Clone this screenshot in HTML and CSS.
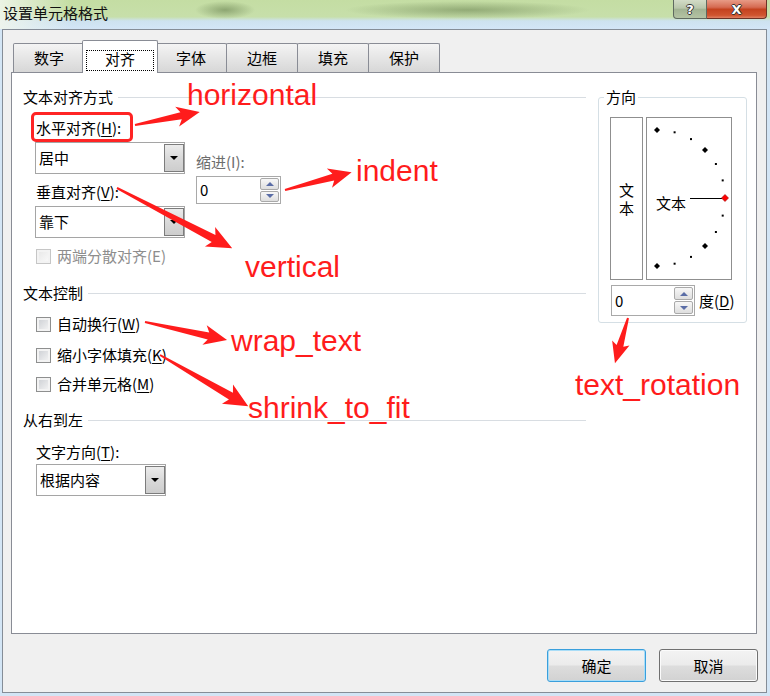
FILE: index.html
```html
<!DOCTYPE html>
<html lang="zh-CN">
<head>
  <meta charset="UTF-8">
  <meta name="viewport" content="width=device-width, initial-scale=1.0">
  <link rel="stylesheet" href="styles.css">
</head>
<body>
<div class="titlebar">
  <div class="title">设置单元格格式</div>
  <div class="caption-buttons">
    <div class="cap-btn help">?</div>
    <div class="cap-btn close">X</div>
  </div>
</div>

<div class="window">
  <div class="tabs">
    <div class="tab">数字</div>
    <div class="tab active"><span class="focus">对齐</span></div>
    <div class="tab">字体</div>
    <div class="tab">边框</div>
    <div class="tab">填充</div>
    <div class="tab">保护</div>
  </div>

  <div class="panel">
    <div class="left">
      <div class="group-head first">文本对齐方式</div>
      <div class="align-row">
        <div class="align-left">
          <div class="hl-label">水平对齐(<u>H</u>):</div>
          <div class="combo"><span class="combo-text">居中</span><div class="drop"></div></div>
          <div class="label v-label">垂直对齐(<u>V</u>):</div>
          <div class="combo combo-2"><span class="combo-text">靠下</span><div class="drop"></div></div>
          <div class="check disabled dist"><span class="box"></span>两端分散对齐(E)</div>
        </div>
        <div class="align-right">
          <div class="label gray indent-label">缩进(I):</div>
          <div class="spin indent-spin">
            <span class="spin-val">0</span>
            <div class="spin-btns"><div class="spin-btn up"></div><div class="spin-btn down"></div></div>
          </div>
        </div>
      </div>

      <div class="group-head ctl-head">文本控制</div>
      <div class="check wrap"><span class="box"></span>自动换行(<u>W</u>)</div>
      <div class="check shrink"><span class="box"></span>缩小字体填充(<u>K</u>)</div>
      <div class="check merge"><span class="box"></span>合并单元格(<u>M</u>)</div>

      <div class="group-head rtl-head">从右到左</div>
      <div class="label dir-label">文字方向(<u>T</u>):</div>
      <div class="combo combo-3"><span class="combo-text">根据内容</span><div class="drop"></div></div>
    </div>

    <div class="right">
      <div class="dir-box">
        <div class="dir-legend">方向</div>
        <div class="dir-row">
          <div class="vtext"><span>文本</span></div>
          <svg class="dial" width="86" height="163" viewBox="0 0 86 163">
            <rect x="0.5" y="0.5" width="85" height="162" fill="#fff" stroke="#8f8f8f"/>
            <g fill="#000">
              <path d="M11 10l3 3-3 3-3-3z"/>
              <path d="M59 30l3 3-3 3-3-3z"/>
              <path d="M59 126l3 3-3 3-3-3z"/>
              <path d="M11 146l3 3-3 3-3-3z"/>
              <rect x="27.6" y="14.3" width="2" height="2"/>
              <rect x="44" y="21.1" width="2" height="2"/>
              <rect x="68.9" y="46" width="2" height="2"/>
              <rect x="75.7" y="62.4" width="2" height="2"/>
              <rect x="75.7" y="97.6" width="2" height="2"/>
              <rect x="68.9" y="114" width="2" height="2"/>
              <rect x="44" y="138.9" width="2" height="2"/>
              <rect x="27.6" y="145.7" width="2" height="2"/>
            </g>
            <line x1="44" y1="81.5" x2="76" y2="81.5" stroke="#000"/>
            <path d="M79 77.5l3.5 3.5-3.5 3.5-3.5-3.5z" fill="#f00" stroke="#900" stroke-width="0.6"/>
            <text class="dial-text" x="10" y="92">文本</text>
          </svg>
        </div>
        <div class="deg-row">
          <div class="spin deg-spin">
            <span class="spin-val">0</span>
            <div class="spin-btns"><div class="spin-btn up"></div><div class="spin-btn down"></div></div>
          </div>
          <span class="deg-label">度(<u>D</u>)</span>
        </div>
      </div>
    </div>
  </div>

  <div class="footer">
    <button class="btn default">确定</button>
    <button class="btn">取消</button>
  </div>
</div>

<!-- red annotations drawn on top of the dialog -->
<svg class="arrows" width="770" height="696" viewBox="0 0 770 696">
  <g fill="#ff1c1c">
    <path transform="translate(135 125) rotate(-11.3)" d="M0 -1L47 -3.5L43 -10L66 0L43 10L47 3.5L0 1Z"/>
    <path transform="translate(285 190) rotate(-15)" d="M0 -1L50 -3.5L46 -10L69 0L46 10L50 3.5L0 1Z"/>
    <path transform="translate(117 188) rotate(27.6)" d="M0 -1L109 -4L105 -11L130 0L105 11L109 4L0 1Z"/>
    <path transform="translate(145 322) rotate(12.4)" d="M0 -1L65 -3.5L61 -10L84 0L61 10L65 3.5L0 1Z"/>
    <path transform="translate(160 355) rotate(30.1)" d="M0 -1L82 -4L78 -11L102 0L78 11L82 4L0 1Z"/>
    <path transform="translate(628 318) rotate(106.1)" d="M0 -1L29 -3.5L26 -9L47 0L26 9L29 3.5L0 1Z"/>
  </g>
</svg>
<div class="note note-horizontal">horizontal</div>
<div class="note note-indent">indent</div>
<div class="note note-vertical">vertical</div>
<div class="note note-wrap">wrap_text</div>
<div class="note note-shrink">shrink_to_fit</div>
<div class="note note-rotation">text_rotation</div>
</body>
</html>
```

FILE: styles.css
```css
body {
  margin: 0;
  width: 770px;
  height: 696px;
  overflow: hidden;
  position: relative;
  background-color: #d3e5f5;
  font-family: "Noto Sans CJK SC", "Microsoft YaHei", sans-serif;
  font-size: 15px;
  color: #000;
}

u {
  text-decoration: underline;
  text-underline-offset: 2px;
}

/* title bar */
.titlebar {
  height: 29px;
  display: flex;
  align-items: flex-start;
  background:
    radial-gradient(closest-side, rgba(95, 120, 70, 0.55), transparent) 195px 1px / 60px 18px no-repeat,
    radial-gradient(closest-side, rgba(95, 120, 70, 0.5), transparent) 345px 1px / 245px 18px no-repeat,
    linear-gradient(to right, rgba(240, 246, 236, 0.9), rgba(240, 246, 236, 0) 70px),
    linear-gradient(#c4dda3 0, #c7dfaa 58%, #cde2ef 72%, #d3e6f7 100%);
}

.title {
  padding-left: 3px;
  line-height: 26px;
  font-size: 15px;
  color: #111;
}

.caption-buttons {
  margin-left: auto;
  margin-right: 3px;
  display: flex;
}

.cap-btn {
  height: 19px;
  box-sizing: border-box;
  border: 1px solid #5f6a60;
  border-top: none;
  text-align: center;
  font-family: "DejaVu Sans", sans-serif;
  font-weight: bold;
  font-size: 13px;
  line-height: 19px;
  color: #fff;
  text-shadow: 1px 0 #333, -1px 0 #333, 0 1px #333, 0 -1px #333;
}

.help {
  width: 34px;
  border-radius: 0 0 0 4px;
  background: linear-gradient(#d3dcc7 0, #b9c6ab 45%, #a2b393 52%, #b4c3a3 100%);
}

.close {
  width: 60px;
  border-color: #6d3226;
  border-left: none;
  border-radius: 0 0 4px 0;
  background: linear-gradient(#e89b86 0, #d66b52 40%, #c4421f 52%, #d0552f 85%, #e08062 100%);
}

/* dialog body */
.window {
  margin: 0 3px 0 2px;
  height: 664px;
  box-sizing: border-box;
  border: 1px solid #858d97;
  background-color: #f0f0f0;
  padding: 10px 9px 0 8px;
}

.tabs {
  height: 32px;
  display: flex;
  align-items: flex-end;
  padding-left: 3px;
}

.tab {
  width: 72px;
  height: 29px;
  margin-left: -1px;
  box-sizing: border-box;
  border: 1px solid #898c95;
  border-bottom: none;
  border-radius: 2px 2px 0 0;
  background: linear-gradient(#f4f4f4, #d7d7d7);
  text-align: center;
  line-height: 28px;
}

.tab.active {
  position: relative;
  z-index: 2;
  width: 76px;
  height: 33px;
  margin: 0 -2px -1px -3px;
  background: #fff;
}

.focus {
  display: block;
  margin: 9px 3px 0 3px;
  height: 16px;
  padding-bottom: 3px;
  border: 1px dotted #000;
  line-height: 16px;
}

.panel {
  height: 562px;
  box-sizing: border-box;
  border: 1px solid #898c95;
  background-color: #fff;
  display: flex;
}

.left {
  width: 574px;
  box-sizing: border-box;
  padding: 14px 0 0 11px;
}

.group-head {
  display: flex;
  align-items: center;
  height: 20px;
  line-height: 20px;
}

.group-head::after {
  content: "";
  flex: 1;
  margin-left: 5px;
  border-top: 1px solid #d8dde2;
}

.ctl-head {
  margin-top: 17px;
}

.rtl-head {
  margin-top: 16px;
}

.label {
  height: 20px;
  line-height: 20px;
  margin-left: 13px;
}

.gray {
  color: #6d6d6d;
}

.align-row {
  display: flex;
  margin-top: 5px;
}

.align-left {
  width: 162px;
}

.hl-label {
  width: 102px;
  height: 30px;
  box-sizing: border-box;
  margin-left: 8px;
  border: 3px solid #ff2424;
  border-radius: 5px;
  padding: 2px 0 0 2px;
  line-height: 22px;
}

.combo {
  margin-left: 12px;
  width: 150px;
  height: 32px;
  box-sizing: border-box;
  border: 1px solid #a5a5a5;
  background: #fff;
  display: flex;
}

.combo-text {
  padding-left: 3px;
  line-height: 30px;
}

.drop {
  margin: 1px 0 1px auto;
  width: 20px;
  box-sizing: border-box;
  border: 1px solid #7c7c7c;
  background: linear-gradient(#ececec, #d9d9d9 50%, #cdcdcd);
  display: flex;
  align-items: center;
  justify-content: center;
}

.drop::after {
  content: "";
  border-left: 4px solid transparent;
  border-right: 4px solid transparent;
  border-top: 4px solid #000;
}

.v-label {
  margin-top: 8px;
}

.combo-2 {
  margin-top: 4px;
}

.check {
  display: flex;
  align-items: center;
  height: 20px;
  line-height: 20px;
  margin-left: 13px;
}

.box {
  width: 15px;
  height: 15px;
  box-sizing: border-box;
  margin-right: 6px;
  border: 1px solid #8e8f8f;
  background: linear-gradient(135deg, #c9ccd1, #f7f7f7);
  box-shadow: inset 0 0 0 2px #f3f3f3;
}

.check.disabled {
  color: #8d8d8d;
}

.check.disabled .box {
  border-color: #c6c6c6;
  background: linear-gradient(135deg, #e6e6e6, #fbfbfb);
}

.dist {
  margin-top: 8px;
}

.wrap {
  margin-top: 11px;
}

.shrink {
  margin-top: 11px;
}

.merge {
  margin-top: 9px;
}

.align-right {
  margin-left: 11px;
}

.indent-label {
  margin: 40px 0 0 0;
}

.spin {
  box-sizing: border-box;
  border: 1px solid #a9a9a9;
  background: #fff;
  display: flex;
}

.spin-val {
  padding-left: 3px;
  line-height: 26px;
}

.spin-btns {
  margin: 1px 1px 1px auto;
  width: 19px;
  display: flex;
  flex-direction: column;
  gap: 1px;
}

.spin-btn {
  flex: 1;
  border: 1px solid #a9a9a9;
  border-radius: 2px;
  background: linear-gradient(#f7f7f7, #dedede);
  display: flex;
  align-items: center;
  justify-content: center;
}

.spin-btn.up::after {
  content: "";
  border-left: 4px solid transparent;
  border-right: 4px solid transparent;
  border-bottom: 4px solid #5a6da6;
}

.spin-btn.down::after {
  content: "";
  border-left: 4px solid transparent;
  border-right: 4px solid transparent;
  border-top: 4px solid #5a6da6;
}

.indent-spin {
  margin-top: 4px;
  width: 85px;
  height: 28px;
}

.dir-label {
  margin-top: 12px;
}

.combo-3 {
  margin-top: 2px;
  margin-left: 13px;
  width: 130px;
}

/* direction group */
.right {
  margin-left: 12px;
}

.dir-box {
  margin-top: 24px;
  width: 149px;
  height: 226px;
  box-sizing: border-box;
  border: 1px solid #d5dfe5;
  border-radius: 3px;
}

.dir-legend {
  width: fit-content;
  margin: -11px 0 0 5px;
  padding: 0 2px;
  background: #fff;
  line-height: 20px;
}

.dir-row {
  display: flex;
  margin: 10px 0 0 11px;
}

.vtext {
  width: 33px;
  height: 163px;
  box-sizing: border-box;
  border: 1px solid #8f8f8f;
  display: flex;
  align-items: center;
  justify-content: center;
}

.vtext span {
  width: 15px;
  line-height: 18px;
}

.dial {
  display: block;
  margin-left: 3px;
}

.dial-text {
  font-family: "Noto Sans CJK SC", sans-serif;
  font-size: 15px;
}

.deg-row {
  display: flex;
  align-items: center;
  margin: 5px 0 0 12px;
}

.deg-spin {
  width: 84px;
  height: 31px;
}

.deg-spin .spin-val {
  line-height: 29px;
}

.deg-label {
  margin-left: 4px;
  line-height: 20px;
}

/* bottom buttons */
.footer {
  display: flex;
  justify-content: flex-end;
  gap: 13px;
  padding-top: 15px;
  margin-right: -1px;
}

.btn {
  width: 99px;
  height: 33px;
  box-sizing: border-box;
  border: 1px solid #707070;
  border-radius: 3px;
  background: linear-gradient(#f3f3f3, #ebebeb 48%, #dddddd 52%, #d2d2d2);
  box-shadow: inset 0 0 0 1px #fbfbfb;
  font-family: "Noto Sans CJK SC", sans-serif;
  font-size: 15px;
  color: #000;
  padding: 0;
}

.btn.default {
  border-color: #3a9fdc;
  box-shadow: inset 0 0 0 1px #a9ddf7;
}

/* annotations */
.arrows {
  position: absolute;
  left: 0;
  top: 0;
  pointer-events: none;
}

.note {
  position: absolute;
  font-family: "Liberation Sans", Arial, sans-serif;
  font-size: 30px;
  line-height: 30px;
  color: #ff1c1c;
  white-space: nowrap;
}

.note-horizontal { left: 187px; top: 80px; }
.note-indent { left: 356px; top: 156px; }
.note-vertical { left: 245px; top: 252px; }
.note-wrap { left: 231px; top: 326px; }
.note-shrink { left: 248px; top: 393px; }
.note-rotation { left: 575px; top: 370px; }
```
